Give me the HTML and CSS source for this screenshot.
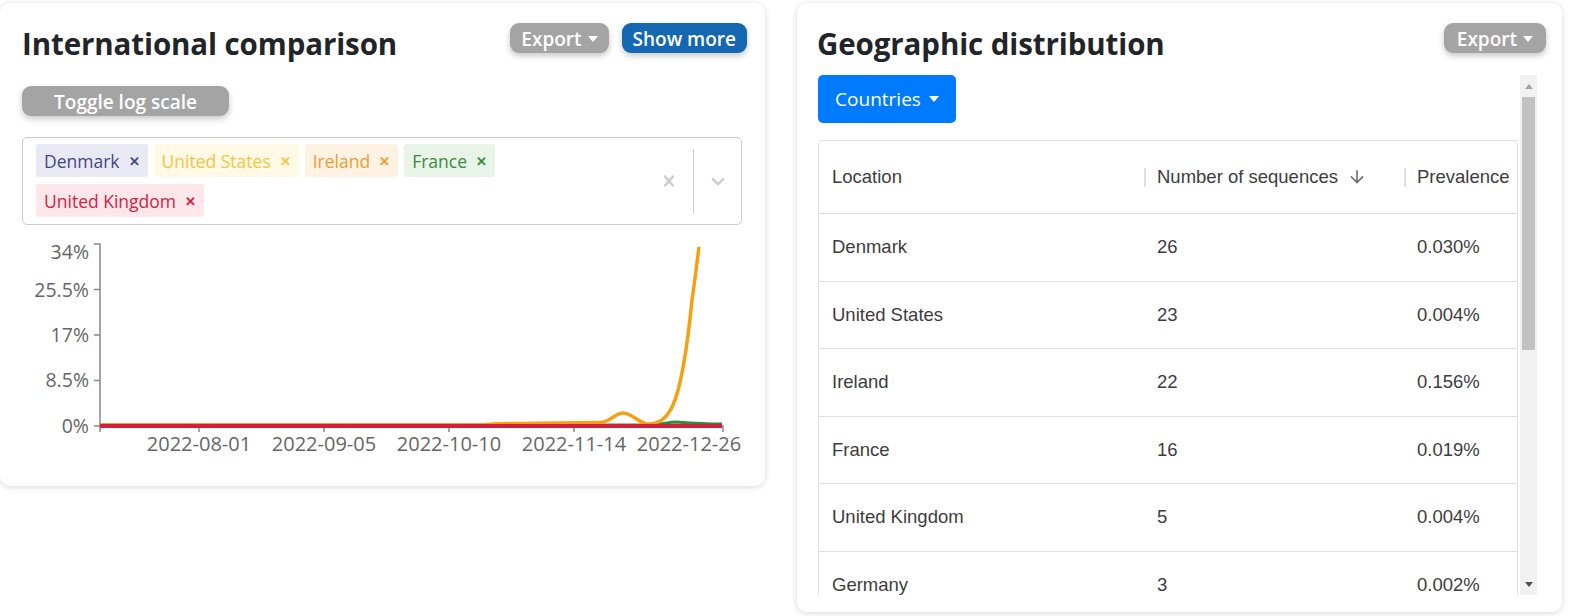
FILE: index.html
```html
<!DOCTYPE html>
<html>
<head>
<meta charset="utf-8">
<link rel="stylesheet" href="styles.css">
</head>
<body>
<div class="page">
  <section class="card card-left">
    <div class="card-head">
      <h3 class="title">International comparison</h3>
      <div class="actions">
        <button class="btn btn-gray">Export <span class="caret"></span></button>
        <button class="btn btn-blue">Show more</button>
      </div>
    </div>
    <button class="btn btn-gray btn-toggle">Toggle log scale</button>
    <div class="select">
      <div class="tags">
        <span class="tag t-dk">Denmark <span class="x">&#x2715;</span></span>
        <span class="tag t-us">United States <span class="x">&#x2715;</span></span>
        <span class="tag t-ie">Ireland <span class="x">&#x2715;</span></span>
        <span class="tag t-fr">France <span class="x">&#x2715;</span></span>
        <span class="tag t-uk">United Kingdom <span class="x">&#x2715;</span></span>
      </div>
      <div class="indicators">
        <svg class="ind-x" width="22" height="22" viewBox="0 0 20 20"><path d="M14.348 14.849c-0.469 0.469-1.229 0.469-1.697 0l-2.651-3.030-2.651 3.029c-0.469 0.469-1.229 0.469-1.697 0-0.469-0.469-0.469-1.229 0-1.697l2.758-3.15-2.759-3.152c-0.469-0.469-0.469-1.228 0-1.697s1.228-0.469 1.697 0l2.652 3.031 2.651-3.031c0.469-0.469 1.228-0.469 1.697 0s0.469 1.229 0 1.697l-2.758 3.152 2.758 3.15c0.469 0.469 0.469 1.229 0 1.698z" fill="#cccccc"/></svg>
        <span class="ind-sep"></span>
        <svg class="ind-chev" width="22" height="22" viewBox="0 0 20 20"><path d="M4.516 7.548c0.436-0.446 1.043-0.481 1.576 0l3.908 3.747 3.908-3.747c0.533-0.481 1.141-0.446 1.574 0 0.436 0.445 0.408 1.197 0 1.615-0.406 0.418-4.695 4.502-4.695 4.502-0.217 0.223-0.502 0.335-0.787 0.335s-0.570-0.112-0.789-0.335c0 0-4.287-4.084-4.695-4.502s-0.436-1.170 0-1.615z" fill="#cccccc"/></svg>
      </div>
    </div>
    <svg class="chart" width="722" height="230" viewBox="22 234 722 230">
      <g class="axis" stroke="#888" fill="none" stroke-width="1.5">
        <path d="M94,244 H100 V426 H94"/>
        <path d="M94,289.5 H100 M94,335 H100 M94,380.5 H100"/>
        <path d="M100,432 V426 H723 V432"/>
        <path d="M199,426 V432 M324,426 V432 M449,426 V432 M574,426 V432"/>
      </g>
      <g class="ylab" fill="#666" font-size="19.5" text-anchor="end">
        <text x="89" y="259">34%</text>
        <text x="89" y="297">25.5%</text>
        <text x="89" y="342">17%</text>
        <text x="89" y="387">8.5%</text>
        <text x="89" y="433">0%</text>
      </g>
      <g class="xlab" fill="#666" font-size="20" text-anchor="middle">
        <text x="199" y="451">2022-08-01</text>
        <text x="324" y="451">2022-09-05</text>
        <text x="449" y="451">2022-10-10</text>
        <text x="574" y="451">2022-11-14</text>
        <text x="689" y="451">2022-12-26</text>
      </g>
      <path d="M100,425 L650,425 C662,425 668,422 676,422 C690,423 705,424 722,424" stroke="#2e8b3a" stroke-width="3" fill="none"/>
      <path d="M100,425.5 L722,425.5" stroke="#3e4a8b" stroke-width="3" fill="none"/>
      <path d="M100,425 L480,425 C490,424 500,423.5 520,423.5 L600,422.5 C610,422.5 615,413 623,413 C632,413 640,424 648,424 C658,424 666,420 673,405 C682,385 688,340 692,300 C695,280 697,262 699,247" stroke="#f4a011" stroke-width="3.5" fill="none" stroke-linejoin="round"/>
      <path d="M100,426 L722,426" stroke="#d41f3c" stroke-width="4" fill="none"/>
    </svg>
  </section>

  <section class="card card-right">
    <div class="card-head">
      <h3 class="title">Geographic distribution</h3>
      <div class="actions">
        <button class="btn btn-gray btn-export-r">Export <span class="caret"></span></button>
      </div>
    </div>
    <div class="scroll">
      <div class="scroll-content">
        <button class="btn-countries">Countries <span class="caret"></span></button>
        <div class="grid">
          <div class="row head">
            <div class="cell">Location</div>
            <div class="cell sep">Number of sequences
              <svg class="sort" width="20" height="20" viewBox="0 0 24 24"><path d="M20 12l-1.41-1.41L13 16.17V4h-2v12.17l-5.58-5.59L4 12l8 8 8-8z" fill="#707070"/></svg>
            </div>
            <div class="cell sep">Prevalence</div>
          </div>
          <div class="row"><div class="cell">Denmark</div><div class="cell">26</div><div class="cell">0.030%</div></div>
          <div class="row"><div class="cell">United States</div><div class="cell">23</div><div class="cell">0.004%</div></div>
          <div class="row"><div class="cell">Ireland</div><div class="cell">22</div><div class="cell">0.156%</div></div>
          <div class="row"><div class="cell">France</div><div class="cell">16</div><div class="cell">0.019%</div></div>
          <div class="row"><div class="cell">United Kingdom</div><div class="cell">5</div><div class="cell">0.004%</div></div>
          <div class="row"><div class="cell">Germany</div><div class="cell">3</div><div class="cell">0.002%</div></div>
        </div>
      </div>
      <div class="scrollbar">
        <span class="sb-btn"><span class="tri-up"></span></span>
        <span class="sb-thumb"></span>
        <span class="sb-track"></span>
        <span class="sb-btn"><span class="tri-down"></span></span>
      </div>
    </div>
  </section>
</div>
</body>
</html>
```
FILE: styles.css
```css
* { box-sizing: border-box; }
html, body { margin: 0; padding: 0; background: #fff; }
body { font-family: "Open Sans", "Noto Sans", sans-serif; color: #212529; }

.page {
  display: flex;
  align-items: flex-start;
  gap: 32px;
  padding: 3px 0 0 0;
  height: 616px;
  overflow: hidden;
}

.card {
  width: 765px;
  background: #fff;
  border-radius: 10px;
  box-shadow: 0 1px 6px rgba(0,0,0,0.16);
  padding: 20px 18px 22px 22px;
}
.card-left { height: 483px; }
.card-right { height: 609px; padding: 20px 16px 0 20px; }

.card-head {
  display: flex;
  justify-content: space-between;
  align-items: flex-start;
}
.title {
  margin: 0;
  font-size: 29.5px;
  font-weight: 700;
  line-height: 41px;
  color: #212529;
  letter-spacing: -0.1px;
}
.actions { display: flex; gap: 13px; }

.btn {
  font-family: inherit;
  border: none;
  height: 30px;
  border-radius: 9px;
  padding: 2px 11px 0;
  font-size: 19px;
  font-weight: 600;
  color: #fff;
  line-height: 28px;
  box-shadow: 0 3px 6px rgba(0,0,0,0.22);
  display: inline-flex;
  align-items: center;
  gap: 6px;
}
.btn-gray { background: #a4a4a4; }
.btn-blue { background: #1467b3; }
.btn-export-r { padding: 2px 13px 0; }
.caret {
  display: inline-block;
  width: 0; height: 0;
  border-left: 5px solid transparent;
  border-right: 5px solid transparent;
  border-top: 6px solid #fff;
  margin-top: 0;
}
.btn-toggle {
  margin-top: 22px;
  width: 207px;
  justify-content: center;
  display: flex;
}

.select {
  margin-top: 21px;
  width: 720px;
  height: 88px;
  border: 1px solid #cccccc;
  border-radius: 5px;
  display: flex;
  justify-content: space-between;
}
.tags {
  display: flex;
  flex-wrap: wrap;
  align-content: flex-start;
  gap: 7px 6px;
  padding: 6px 0 0 13px;
  width: 540px;
}
.tag {
  height: 33px;
  display: inline-flex;
  align-items: center;
  padding: 0 8px 0 8px;
  font-size: 17.5px;
  border-radius: 3px;
  gap: 9px;
  white-space: nowrap;
}
.tag .x { font-size: 13px; font-weight: 700; }
.t-dk { background: #e9e9f4; color: #42468a; }
.t-us { background: #fff9e6; color: #f7c53c; }
.t-ie { background: #fef2e2; color: #f19c32; }
.t-fr { background: #e9f4e8; color: #3b8a3b; }
.t-uk { background: #fde7ea; color: #d5213f; }

.indicators {
  display: flex;
  align-items: center;
  padding-right: 12px;
}
.ind-x { margin-right: 13px; }
.ind-sep { width: 1px; height: 64px; background: #cccccc; margin-right: 13px; }

.chart { display: block; margin-top: 9px; font-family: "Open Sans", sans-serif; }

/* right card */
.scroll {
  margin-top: 11px;
  display: flex;
  height: 520px;
  overflow: hidden;
  width: 720px;
}
.scroll-content { width: 701px; overflow: hidden; padding-left: 1px; }
.btn-countries {
  font-family: inherit;
  background: #007bff;
  color: #fff;
  border: none;
  border-radius: 5px;
  height: 48px;
  width: 138px;
  font-size: 19px;
  display: flex;
  align-items: center;
  justify-content: center;
  gap: 8px;
  padding: 0;
}
.grid {
  margin-top: 17px;
  border: 1px solid #e0e0e0;
  border-bottom: none;
  border-radius: 5px 5px 0 0;
  font-family: "Liberation Sans", Arial, sans-serif;
  font-size: 18.5px;
  color: #3d3d3d;
  width: 700px;
}
.row {
  display: grid;
  grid-template-columns: 325px 260px 1fr;
  height: 67.5px;
  border-bottom: 1px solid #e0e0e0;
  align-items: center;
}
.row.head { height: 73px; }
.cell {
  padding-left: 13px;
  white-space: nowrap;
  position: relative;
  display: flex;
  align-items: center;
}
.cell.sep::before {
  content: "";
  position: absolute;
  left: 0;
  top: 50%;
  margin-top: -9px;
  width: 2px;
  height: 19px;
  background: #e0e0e0;
}
.sort { margin-left: 9px; }

.scrollbar {
  width: 17px;
  margin-left: 2px;
  background: #f1f1f1;
  display: flex;
  flex-direction: column;
  height: 520px;
}
.sb-btn {
  height: 22px;
  display: flex;
  align-items: center;
  justify-content: center;
}
.tri-up { width: 0; height: 0; border-left: 4px solid transparent; border-right: 4px solid transparent; border-bottom: 5px solid #a3a3a3; }
.tri-down { width: 0; height: 0; border-left: 4px solid transparent; border-right: 4px solid transparent; border-top: 5px solid #505050; }
.sb-thumb { height: 253px; margin: 0 2px; background: #c1c1c1; }
.sb-track { flex: 1; }
```
